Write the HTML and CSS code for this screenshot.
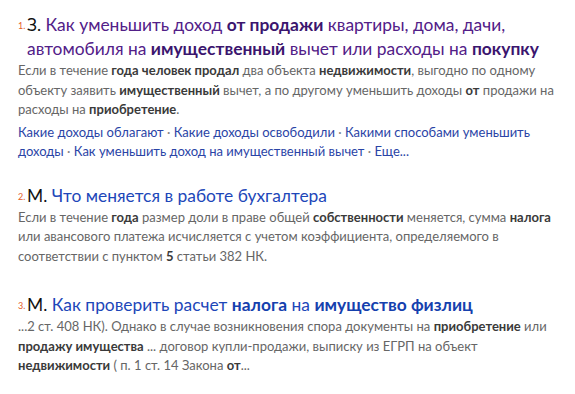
FILE: index.html
```html
<!DOCTYPE html>
<html lang="ru">
<head>
<meta charset="utf-8">
<link rel="stylesheet" href="styles.css">
</head>
<body>
<div class="results">
  <div class="item">
    <div class="title visited"><span class="num">1.</span><span class="src">З.</span> Как уменьшить доход <b>от продажи</b> квартиры, дома, дачи, автомобиля на <b>имущественный</b> вычет или расходы на <b>покупку</b></div>
    <div class="snippet">Если в течение <b>года человек продал</b> два объекта <b>недвижимости</b>, выгодно по одному объекту заявить <b>имущественный</b> вычет, а по другому уменьшить доходы <b>от</b> продажи на расходы на <b>приобретение</b>.</div>
    <div class="links"><a>Какие доходы облагают</a> · <a>Какие доходы освободили</a> · <a>Какими способами уменьшить доходы</a> · <a>Как уменьшить доход на имущественный вычет</a> · <a>Еще...</a></div>
  </div>
  <div class="item">
    <div class="title"><span class="num">2.</span><span class="src">М.</span> Что меняется в работе бухгалтера</div>
    <div class="snippet">Если в течение <b>года</b> размер доли в праве общей <b>собственности</b> меняется, сумма <b>налога</b> или авансового платежа исчисляется с учетом коэффициента, определяемого в соответствии с пунктом <b>5</b> статьи 382 НК.</div>
  </div>
  <div class="item">
    <div class="title"><span class="num">3.</span><span class="src">М.</span> Как проверить расчет <b>налога</b> на <b>имущество физлиц</b></div>
    <div class="snippet">...2 ст. 408 НК). Однако в случае возникновения спора документы на <b>приобретение</b> или <b>продажу имущества</b> ... договор купли-продажи, выписку из ЕГРП на объект <b>недвижимости</b> ( п. 1 ст. 14 Закона <b>от</b>...</div>
  </div>
</div>
</body>
</html>
```
FILE: styles.css
```css
html, body {
  margin: 0;
  padding: 0;
  background: #fff;
}
body {
  font-family: "Lato", "Open Sans", sans-serif;
}
.results {
  display: flex;
  flex-direction: column;
  gap: 27px;
  padding: 13px 0 0 18px;
  width: 540px;
}
.item {
  display: flex;
  flex-direction: column;
}
.title {
  position: relative;
  padding-left: 9px;
  font-size: 17.4px;
  line-height: 24px;
  color: #1d47b9;
}
.title.visited {
  color: #522088;
}
.title b {
  font-weight: 700;
  color: #1540ae;
}
.title.visited b {
  color: #3b156e;
}
.num {
  position: absolute;
  left: 0;
  top: 7px;
  font-size: 9px;
  line-height: 12px;
  color: #e4602a;
}
.src {
  color: #111;
}
.snippet {
  font-size: 13px;
  line-height: 19.5px;
  color: #666;
}
.snippet b {
  color: #3a3a3a;
  font-weight: 700;
}
.links {
  margin-top: 3px;
  margin-bottom: -5px;
  font-size: 13px;
  line-height: 19.5px;
  color: #888;
}
.links a {
  color: #2a44a6;
}
```
